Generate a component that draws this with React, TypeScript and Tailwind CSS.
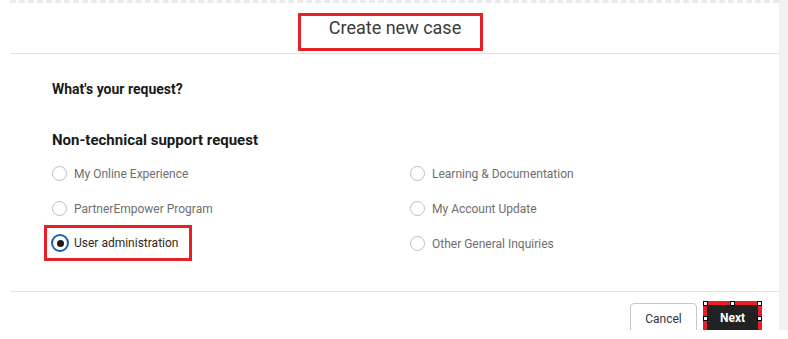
import React, { useState } from 'react';

const leftOptions = ['My Online Experience', 'PartnerEmpower Program', 'User administration'];
const rightOptions = ['Learning & Documentation', 'My Account Update', 'Other General Inquiries'];

function Radio({ label, checked, onSelect }: { label: string; checked: boolean; onSelect: () => void }) {
  return (
    <button type="button" onClick={onSelect} className={`flex h-[35px] items-center text-left ${checked ? 'gap-[5px]' : 'gap-[7px]'}`}>
      {checked ? (
        <span className="flex h-[18px] w-[18px] items-center justify-center rounded-full border-2 border-[#1f5fae] bg-white">
          <span className="h-[7px] w-[7px] rounded-full bg-[#1b1b1b]" />
        </span>
      ) : (
        <span className="h-[15px] w-[15px] rounded-full border border-[#bdbdbd] bg-white" />
      )}
      <span className={checked ? 'text-[12px] text-[#2a2a2a]' : 'text-[12px] text-[#6e6e6e]'}>{label}</span>
    </button>
  );
}

function Handle({ className }: { className: string }) {
  return <span className={`absolute h-[5px] w-[5px] border border-black bg-white ${className}`} />;
}

export default function App() {
  const [selected, setSelected] = useState('User administration');

  return (
    <div className="h-[339px] w-[788px] overflow-hidden bg-white font-['Roboto',sans-serif]">
      <div className="flex h-[330px]">
        <div className="ml-[10px] flex h-[330px] w-[769px] flex-col overflow-hidden">
          <div className="h-[3px] shrink-0 border-t-[3px] border-dashed border-[#ebebeb]" />

          <header className="flex h-[51px] shrink-0 items-start justify-center border-b border-[#e3e3e3] pr-[8px] pt-[10px]">
            <div className="flex h-[38px] w-[185px] items-start justify-center border-[3px] border-[#e81f27] pl-[9px] pt-[1px]">
              <h1 className="text-[18px] leading-[21px] text-[#3b3b3b]">Create new case</h1>
            </div>
          </header>

          <main className="flex h-[238px] shrink-0 flex-col border-b border-[#e3e3e3] pl-[42px]">
            <h2 className="mt-[27px] text-[14px] font-bold leading-[17px] text-[#1a1a1a]">What's your request?</h2>
            <h3 className="mt-[33px] text-[15px] font-bold leading-[18px] text-[#1a1a1a]">Non-technical support request</h3>
            <div className="mt-[7px] grid grid-cols-[358px_1fr]">
              <div className="flex flex-col">
                {leftOptions.map((o) =>
                  o === selected ? (
                    <div key={o} className="-ml-[8px] -mt-[1px] flex h-[36px] w-[148px] items-center border-[3px] border-[#e81f27] pl-[4px]">
                      <Radio label={o} checked onSelect={() => setSelected(o)} />
                    </div>
                  ) : (
                    <Radio key={o} label={o} checked={false} onSelect={() => setSelected(o)} />
                  )
                )}
              </div>
              <div className="flex flex-col">
                {rightOptions.map((o) => (
                  <Radio key={o} label={o} checked={o === selected} onSelect={() => setSelected(o)} />
                ))}
              </div>
            </div>
          </main>

          <footer className="flex shrink-0 items-start justify-end gap-[6px] pr-[17px] pt-[9px]">
            <button type="button" className="mt-[2px] h-[32px] w-[67px] rounded-[4px] border border-[#c8c8c8] bg-white text-[12px] text-[#333]">
              Cancel
            </button>
            <div className="relative h-[34px] w-[59px] border-[3px] border-dashed border-[#e81f27] bg-[#e81f27] p-px">
              <button type="button" className="h-full w-full bg-[#222] text-[12px] font-bold text-white">
                Next
              </button>
              <Handle className="-left-[3px] -top-[3px]" />
              <Handle className="left-[24px] -top-[3px]" />
              <Handle className="-right-[3px] -top-[3px]" />
              <Handle className="-left-[3px] top-[12px]" />
              <Handle className="-right-[3px] top-[12px]" />
              <Handle className="-left-[3px] top-[26px]" />
              <Handle className="-right-[3px] top-[26px]" />
            </div>
          </footer>
        </div>
        <div className="h-[330px] w-[9px] bg-[#f1f1f1]" />
      </div>
    </div>
  );
}
